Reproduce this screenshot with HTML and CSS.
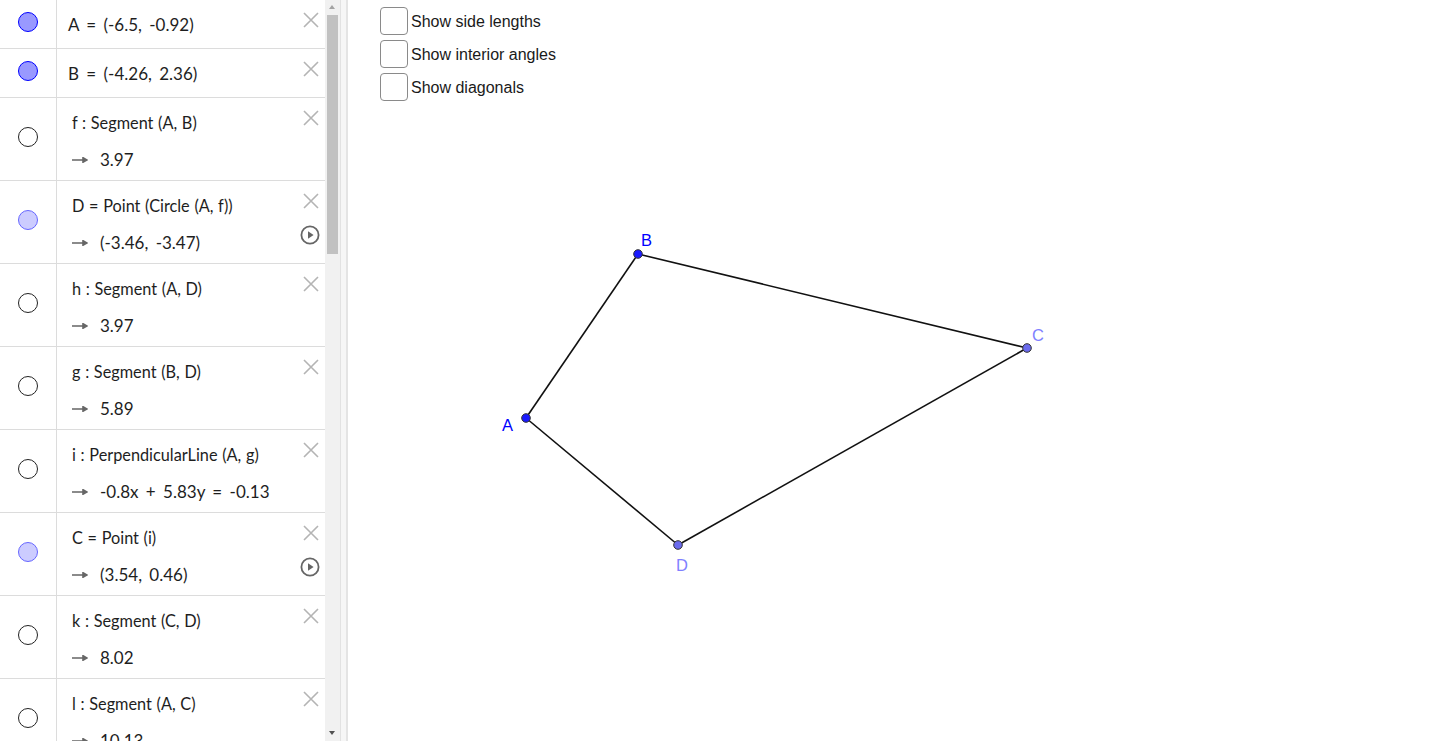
FILE: index.html
```html
<!DOCTYPE html>
<html>
<head>
<meta charset="utf-8">
<link rel="stylesheet" href="styles.css">
</head>
<body>
<div class="app">
  <div class="algebra">
    <div class="list">
      <div class="row">
        <div class="marker"><span class="dot dot-strong"></span></div>
        <div class="content"><div class="line">A = (-6.5, -0.92)</div></div>
        <svg class="close" viewBox="0 0 16 16"><path d="M1 1L15 15M15 1L1 15"/></svg>
      </div>
      <div class="row">
        <div class="marker"><span class="dot dot-strong"></span></div>
        <div class="content"><div class="line">B = (-4.26, 2.36)</div></div>
        <svg class="close" viewBox="0 0 16 16"><path d="M1 1L15 15M15 1L1 15"/></svg>
      </div>
      <div class="row">
        <div class="marker"><span class="dot dot-empty"></span></div>
        <div class="content">
          <div class="line cmd">f : Segment (A, B)</div>
          <div class="line out"><svg class="arrow" viewBox="0 0 16 6"><path d="M0 3H13M11 0.8L15 3L11 5.2Z"/></svg>3.97</div>
        </div>
        <svg class="close" viewBox="0 0 16 16"><path d="M1 1L15 15M15 1L1 15"/></svg>
      </div>
      <div class="row">
        <div class="marker"><span class="dot dot-light"></span></div>
        <div class="content">
          <div class="line cmd">D = Point (Circle (A, f))</div>
          <div class="line out"><svg class="arrow" viewBox="0 0 16 6"><path d="M0 3H13M11 0.8L15 3L11 5.2Z"/></svg>(-3.46, -3.47)</div>
        </div>
        <svg class="close" viewBox="0 0 16 16"><path d="M1 1L15 15M15 1L1 15"/></svg>
        <svg class="play" viewBox="0 0 20 20"><circle cx="10" cy="10" r="8.6"/><path d="M8 6.2L13.6 10L8 13.8Z"/></svg>
      </div>
      <div class="row">
        <div class="marker"><span class="dot dot-empty"></span></div>
        <div class="content">
          <div class="line cmd">h : Segment (A, D)</div>
          <div class="line out"><svg class="arrow" viewBox="0 0 16 6"><path d="M0 3H13M11 0.8L15 3L11 5.2Z"/></svg>3.97</div>
        </div>
        <svg class="close" viewBox="0 0 16 16"><path d="M1 1L15 15M15 1L1 15"/></svg>
      </div>
      <div class="row">
        <div class="marker"><span class="dot dot-empty"></span></div>
        <div class="content">
          <div class="line cmd">g : Segment (B, D)</div>
          <div class="line out"><svg class="arrow" viewBox="0 0 16 6"><path d="M0 3H13M11 0.8L15 3L11 5.2Z"/></svg>5.89</div>
        </div>
        <svg class="close" viewBox="0 0 16 16"><path d="M1 1L15 15M15 1L1 15"/></svg>
      </div>
      <div class="row">
        <div class="marker"><span class="dot dot-empty"></span></div>
        <div class="content">
          <div class="line cmd">i : PerpendicularLine (A, g)</div>
          <div class="line out"><svg class="arrow" viewBox="0 0 16 6"><path d="M0 3H13M11 0.8L15 3L11 5.2Z"/></svg>-0.8x + 5.83y = -0.13</div>
        </div>
        <svg class="close" viewBox="0 0 16 16"><path d="M1 1L15 15M15 1L1 15"/></svg>
      </div>
      <div class="row">
        <div class="marker"><span class="dot dot-light"></span></div>
        <div class="content">
          <div class="line cmd">C = Point (i)</div>
          <div class="line out"><svg class="arrow" viewBox="0 0 16 6"><path d="M0 3H13M11 0.8L15 3L11 5.2Z"/></svg>(3.54, 0.46)</div>
        </div>
        <svg class="close" viewBox="0 0 16 16"><path d="M1 1L15 15M15 1L1 15"/></svg>
        <svg class="play" viewBox="0 0 20 20"><circle cx="10" cy="10" r="8.6"/><path d="M8 6.2L13.6 10L8 13.8Z"/></svg>
      </div>
      <div class="row">
        <div class="marker"><span class="dot dot-empty"></span></div>
        <div class="content">
          <div class="line cmd">k : Segment (C, D)</div>
          <div class="line out"><svg class="arrow" viewBox="0 0 16 6"><path d="M0 3H13M11 0.8L15 3L11 5.2Z"/></svg>8.02</div>
        </div>
        <svg class="close" viewBox="0 0 16 16"><path d="M1 1L15 15M15 1L1 15"/></svg>
      </div>
      <div class="row">
        <div class="marker"><span class="dot dot-empty"></span></div>
        <div class="content">
          <div class="line cmd">l : Segment (A, C)</div>
          <div class="line out"><svg class="arrow" viewBox="0 0 16 6"><path d="M0 3H13M11 0.8L15 3L11 5.2Z"/></svg>10.13</div>
        </div>
        <svg class="close" viewBox="0 0 16 16"><path d="M1 1L15 15M15 1L1 15"/></svg>
      </div>
    </div>
    <div class="scrollbar">
      <span class="sb-up"></span>
      <div class="sb-thumb"></div>
      <span class="sb-down"></span>
    </div>
  </div>
  <div class="divider"></div>
  <div class="graphics">
    <div class="checks">
      <label class="check"><span class="box"></span>Show side lengths</label>
      <label class="check"><span class="box"></span>Show interior angles</label>
      <label class="check"><span class="box"></span>Show diagonals</label>
    </div>
    <svg class="canvas" width="1092" height="741" viewBox="0 0 1092 741">
      <g class="seg">
        <line x1="178" y1="418" x2="290" y2="254"/>
        <line x1="290" y1="254" x2="679" y2="348"/>
        <line x1="679" y1="348" x2="330" y2="545"/>
        <line x1="330" y1="545" x2="178" y2="418"/>
      </g>
      <circle class="pt pt-free" cx="178" cy="418" r="4.3"/>
      <circle class="pt pt-free" cx="290" cy="254" r="4.3"/>
      <circle class="pt pt-dep" cx="679" cy="348" r="4.3"/>
      <circle class="pt pt-dep" cx="330" cy="545" r="4.3"/>
      <text class="lbl lbl-free" x="293" y="246">B</text>
      <text class="lbl lbl-free" x="154" y="431">A</text>
      <text class="lbl lbl-dep" x="684" y="341">C</text>
      <text class="lbl lbl-dep" x="328" y="571">D</text>
    </svg>
  </div>
</div>
</body>
</html>
```
FILE: styles.css
```css
* { box-sizing: border-box; }
html, body {
  margin: 0;
  padding: 0;
  width: 1440px;
  height: 741px;
  overflow: hidden;
  background: #fff;
}
.app {
  display: flex;
  width: 1440px;
  height: 741px;
}
.algebra {
  display: flex;
  width: 340px;
  height: 741px;
  flex: none;
  overflow: hidden;
}
.list {
  width: 325px;
  flex: none;
  height: 741px;
  overflow: hidden;
  background: linear-gradient(to right, transparent 56px, #dcdcdc 56px, #dcdcdc 57px, transparent 57px);
}
.row {
  position: relative;
  display: flex;
  border-bottom: 1px solid #dcdcdc;
}
.marker {
  width: 57px;
  flex: none;
  display: flex;
  align-items: center;
  justify-content: center;
  padding-bottom: 4px;
  padding-right: 1px;
}
.dot {
  display: block;
  width: 20px;
  height: 20px;
  border-radius: 50%;
}
.dot-strong { background: #9999ff; border: 1px solid #0000ff; }
.dot-light { background: #ccccff; border: 1px solid #6666ff; }
.dot-empty { background: #fff; border: 1.2px solid #222; }
.content {
  flex: 1;
  padding: 13px 0 11px 11px;
  font-family: "Lato", "Open Sans", sans-serif;
  font-size: 17px;
  color: #1e1e1e;
  word-spacing: 3px;
}
.line {
  height: 24px;
  line-height: 24px;
  white-space: nowrap;
}
.line.cmd {
  font-size: 16.3px;
  word-spacing: 0.5px;
  padding-left: 4px;
}
.line.out {
  margin-top: 13px;
  margin-bottom: -3px;
  display: flex;
  align-items: center;
  padding-left: 4px;
}
.arrow {
  width: 16px;
  height: 6px;
  margin-right: 12px;
  fill: #666;
  stroke: #666;
  stroke-width: 1.6;
}
.close {
  position: absolute;
  left: 303px;
  top: 12px;
  width: 16px;
  height: 16px;
  fill: none;
  stroke: #b4b4b4;
  stroke-width: 1.6;
}
.play {
  position: absolute;
  left: 300px;
  top: 44px;
  width: 20px;
  height: 20px;
  fill: none;
  stroke: #666;
  stroke-width: 1.8;
}
.play path { fill: #666; stroke: none; }
.scrollbar {
  position: relative;
  width: 15px;
  flex: none;
  height: 741px;
  background: #f1f1f1;
}
.sb-thumb {
  position: absolute;
  left: 2px;
  top: 15px;
  width: 11px;
  height: 239px;
  background: #c1c1c1;
}
.sb-up, .sb-down {
  position: absolute;
  left: 4px;
  width: 0;
  height: 0;
  border-left: 3.5px solid transparent;
  border-right: 3.5px solid transparent;
}
.sb-up { top: 5px; border-bottom: 4px solid #a3a3a3; }
.sb-down { bottom: 6px; border-top: 4px solid #505050; }
.divider {
  width: 8px;
  flex: none;
  height: 741px;
  background: #f6f6f6;
  border-left: 1px solid #e2e2e2;
  border-right: 2px solid #e4e4e4;
}
.graphics {
  position: relative;
  flex: 1;
  height: 741px;
  background: #fff;
}
.checks {
  position: absolute;
  left: 32px;
  top: 7px;
  display: flex;
  flex-direction: column;
  gap: 5px;
}
.check {
  display: flex;
  align-items: center;
  font-family: "Liberation Sans", Arial, sans-serif;
  font-size: 16px;
  color: #1a1a1a;
  height: 28px;
  line-height: 28px;
  padding-top: 2px;
}
.box {
  width: 28px;
  height: 28px;
  border: 1px solid #8a8a8a;
  border-radius: 4px;
  background: #fff;
  margin-right: 3px;
  margin-top: -2px;
}
.canvas {
  position: absolute;
  left: 0;
  top: 0;
}
.seg line {
  stroke: #111;
  stroke-width: 1.6;
}
.pt { stroke: #333; stroke-width: 1; }
.pt-free { fill: #1a1aff; }
.pt-dep { fill: #6b6bee; }
.lbl {
  font-family: "Liberation Sans", Arial, sans-serif;
  font-size: 16.5px;
}
.lbl-free { fill: #0000ff; }
.lbl-dep { fill: #8080ff; }
```
